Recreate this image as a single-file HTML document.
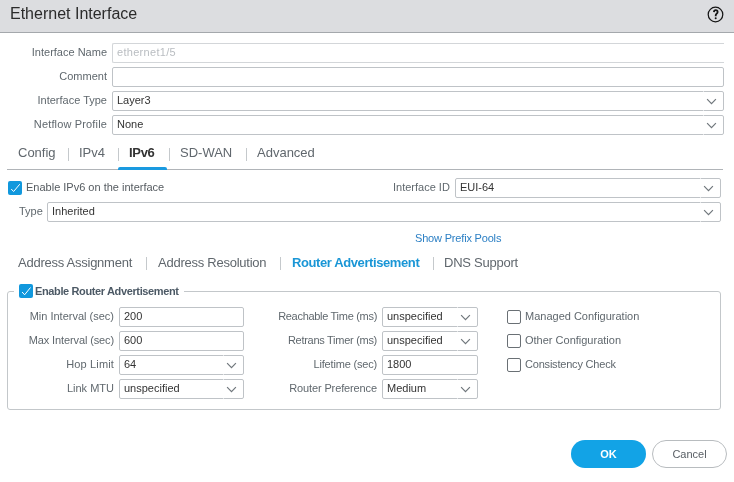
<!DOCTYPE html>
<html><head><meta charset="utf-8">
<style>
*{box-sizing:border-box;margin:0;padding:0}
html,body{width:734px;height:482px;overflow:hidden;background:#fff}
body{position:relative;font-family:"Liberation Sans",sans-serif;color:#333}
.a{position:absolute}
.t{position:absolute;white-space:nowrap;font-size:11px;line-height:11px}
.lbl{color:#60686e;text-align:right}
.val{color:#333}
.box{position:absolute;border:1px solid #bfc3c7;border-radius:2px;background:#fff;height:20px}
.sel .sep{position:absolute;top:-1px;bottom:-1px;width:1px;background:linear-gradient(#e4e6e8 1px,transparent 1px,transparent 19px,#e4e6e8 19px)}
.chev{position:absolute;width:12px;height:8px}
.hdr{position:absolute;left:0;top:0;width:734px;height:33px;background:#dcdde0;border-bottom:1px solid #a4a8ac}
.tab{position:absolute;white-space:nowrap;font-size:13px;line-height:13px;color:#60676d}
.vsep{position:absolute;width:1px;background:#c5c9cc}
.cb{position:absolute;width:14px;height:14px;border:1px solid #6a7075;border-radius:2px;background:#fff}
.cbon{position:absolute;width:14px;height:14px;border-radius:2px;background:#1198dd}
</style></head><body><div id="w" style="position:absolute;left:0;top:0;width:734px;height:482px;will-change:transform">
<div class="hdr"></div>
<div class="t" style="left:10px;top:6px;font-size:16px;line-height:16px;color:#2b2b2b">Ethernet Interface</div>
<svg class="a" style="left:700px;top:0" width="34" height="32" viewBox="700 0 34 32"><circle cx="715.5" cy="14.5" r="7.3" fill="none" stroke="#151515" stroke-width="1.25"/><path d="M713.9 12.1 C714 10.8 714.8 10.1 715.8 10.1 C716.9 10.1 717.6 10.9 717.6 11.9 C717.6 13.1 716.6 13.5 716.1 14.3 C715.8 14.8 715.7 15.3 715.7 16.2" fill="none" stroke="#151515" stroke-width="1.8"/><circle cx="715.7" cy="18.2" r="1" fill="#151515"/></svg>

<!-- top form -->
<div class="t lbl" style="left:0;width:107px;top:47px">Interface Name</div>
<div class="box" style="left:112px;top:43px;width:612px;border-color:#d3d6d9;border-right:0;border-radius:2px 0 0 2px"></div>
<div class="t" style="left:117px;top:47px;color:#b9bdc1;letter-spacing:0.3px">ethernet1/5</div>

<div class="t lbl" style="left:0;width:107px;top:71px">Comment</div>
<div class="box" style="left:112px;top:67px;width:612px"></div>

<div class="t lbl" style="left:0;width:107px;top:95px">Interface Type</div>
<div class="box sel" style="left:112px;top:91px;width:612px"><div class="sep" style="left:590px"></div></div>
<div class="t val" style="left:117px;top:95px">Layer3</div>

<div class="t lbl" style="left:0;width:107px;top:119px;letter-spacing:0.15px">Netflow Profile</div>
<div class="box sel" style="left:112px;top:115px;width:612px"><div class="sep" style="left:590px"></div></div>
<div class="t val" style="left:117px;top:119px">None</div>

<!-- tabs -->
<div class="tab" style="left:18px;top:146px">Config</div>
<div class="vsep" style="left:68px;top:148px;height:13px"></div>
<div class="tab" style="left:79px;top:146px">IPv4</div>
<div class="vsep" style="left:118px;top:148px;height:13px"></div>
<div class="tab" style="left:129px;top:146px;color:#333;font-weight:700;letter-spacing:-0.3px">IPv6</div>
<div class="vsep" style="left:169px;top:148px;height:13px"></div>
<div class="tab" style="left:180px;top:146px">SD-WAN</div>
<div class="vsep" style="left:246px;top:148px;height:13px"></div>
<div class="tab" style="left:257px;top:146px">Advanced</div>
<div class="a" style="left:7px;top:169px;width:716px;height:1px;background:#b0b4b8"></div>
<div class="a" style="left:118px;top:167px;width:49px;height:3px;background:#1a9ae0;border-radius:2px 2px 0 0"></div>

<!-- ipv6 -->
<div class="cbon" style="left:8px;top:181px"></div>
<div class="t" style="left:26px;top:182px;color:#555b60">Enable IPv6 on the interface</div>
<div class="t lbl" style="left:393px;top:182px">Interface ID</div>
<div class="box sel" style="left:455px;top:178px;width:266px"><div class="sep" style="left:244px"></div></div>
<div class="t val" style="left:460px;top:182px">EUI-64</div>

<div class="t lbl" style="left:19px;top:206px">Type</div>
<div class="box sel" style="left:47px;top:202px;width:674px"><div class="sep" style="left:652px"></div></div>
<div class="t val" style="left:52px;top:206px">Inherited</div>

<div class="t" style="left:415px;top:233px;color:#2b7fc4;letter-spacing:-0.18px">Show Prefix Pools</div>

<!-- subtabs -->
<div class="tab" style="left:18px;top:256px;letter-spacing:-0.25px">Address Assignment</div>
<div class="vsep" style="left:146px;top:257px;height:13px"></div>
<div class="tab" style="left:158px;top:256px;letter-spacing:-0.25px">Address Resolution</div>
<div class="vsep" style="left:280px;top:257px;height:13px"></div>
<div class="tab" style="left:292px;top:256px;color:#1a96d6;font-weight:700;letter-spacing:-0.4px">Router Advertisement</div>
<div class="vsep" style="left:433px;top:257px;height:13px"></div>
<div class="tab" style="left:444px;top:256px;letter-spacing:-0.25px">DNS Support</div>

<!-- fieldset -->
<div class="a" style="left:7px;top:291px;width:714px;height:119px;border:1px solid #c3c7ca;border-radius:3px"></div>
<div class="a" style="left:14px;top:285px;width:170px;height:12px;background:#fff"></div>
<div class="cbon" style="left:19px;top:284px"></div>
<div class="t" style="left:35px;top:286px;font-weight:700;color:#4c5965;letter-spacing:-0.37px">Enable Router Advertisement</div>

<div class="t lbl" style="left:0;width:114px;top:311px">Min Interval (sec)</div>
<div class="box" style="left:119px;top:307px;width:125px"></div>
<div class="t val" style="left:124px;top:311px">200</div>
<div class="t lbl" style="left:0;width:114px;top:335px;letter-spacing:-0.12px">Max Interval (sec)</div>
<div class="box" style="left:119px;top:331px;width:125px"></div>
<div class="t val" style="left:124px;top:335px">600</div>
<div class="t lbl" style="left:0;width:114px;top:359px;letter-spacing:0.15px">Hop Limit</div>
<div class="box sel" style="left:119px;top:355px;width:125px"><div class="sep" style="left:103px"></div></div>
<div class="t val" style="left:124px;top:359px">64</div>
<div class="t lbl" style="left:0;width:114px;top:383px">Link MTU</div>
<div class="box sel" style="left:119px;top:379px;width:125px"><div class="sep" style="left:103px"></div></div>
<div class="t val" style="left:124px;top:383px">unspecified</div>

<div class="t lbl" style="left:200px;width:177px;top:311px;letter-spacing:-0.3px">Reachable Time (ms)</div>
<div class="box sel" style="left:382px;top:307px;width:96px"><div class="sep" style="left:74px"></div></div>
<div class="t val" style="left:387px;top:311px">unspecified</div>
<div class="t lbl" style="left:200px;width:177px;top:335px;letter-spacing:-0.28px">Retrans Timer (ms)</div>
<div class="box sel" style="left:382px;top:331px;width:96px"><div class="sep" style="left:74px"></div></div>
<div class="t val" style="left:387px;top:335px">unspecified</div>
<div class="t lbl" style="left:200px;width:177px;top:359px;letter-spacing:-0.18px">Lifetime (sec)</div>
<div class="box" style="left:382px;top:355px;width:96px"></div>
<div class="t val" style="left:387px;top:359px">1800</div>
<div class="t lbl" style="left:200px;width:177px;top:383px;letter-spacing:-0.12px">Router Preference</div>
<div class="box sel" style="left:382px;top:379px;width:96px"><div class="sep" style="left:74px"></div></div>
<div class="t val" style="left:387px;top:383px">Medium</div>

<div class="cb" style="left:507px;top:310px"></div>
<div class="t lbl" style="left:525px;top:311px;text-align:left">Managed Configuration</div>
<div class="cb" style="left:507px;top:334px"></div>
<div class="t lbl" style="left:525px;top:335px;text-align:left">Other Configuration</div>
<div class="cb" style="left:507px;top:358px"></div>
<div class="t lbl" style="left:525px;top:359px;text-align:left;letter-spacing:-0.2px">Consistency Check</div>

<!-- buttons -->
<div class="a" style="left:571px;top:440px;width:75px;height:28px;border-radius:14px;background:#12a3e6"></div>
<div class="t" style="left:571px;width:75px;text-align:center;top:449px;color:#fff;font-weight:700">OK</div>
<div class="a" style="left:652px;top:440px;width:75px;height:28px;border-radius:14px;border:1px solid #b8bcbf;background:#fff"></div>
<div class="t" style="left:652px;width:75px;text-align:center;top:449px;color:#5a6066">Cancel</div>

<!-- chevrons -->
<svg class="a" style="left:0;top:0" width="734" height="482">
<g fill="none" stroke="#70777c" stroke-width="1.2">
<path d="M707.1 99.2 L711.5 103.6 L715.9 99.2"/>
<path d="M707.1 123.2 L711.5 127.6 L715.9 123.2"/>
<path d="M704.1 186.2 L708.5 190.6 L712.9 186.2"/>
<path d="M704.1 210.2 L708.5 214.6 L712.9 210.2"/>
<path d="M227.1 363.2 L231.5 367.6 L235.9 363.2"/>
<path d="M227.1 387.2 L231.5 391.6 L235.9 387.2"/>
<path d="M461.1 315.2 L465.5 319.6 L469.9 315.2"/>
<path d="M461.1 339.2 L465.5 343.6 L469.9 339.2"/>
<path d="M461.1 387.2 L465.5 391.6 L469.9 387.2"/>
</g>
<g fill="none" stroke="#fff" stroke-width="1">
<path d="M11.2 189 L13.6 191.5 L19.8 184.2"/>
<path d="M22.1 292 L24.6 294.8 L30.5 287.5"/>
</g>
</svg>
</div></body></html>
